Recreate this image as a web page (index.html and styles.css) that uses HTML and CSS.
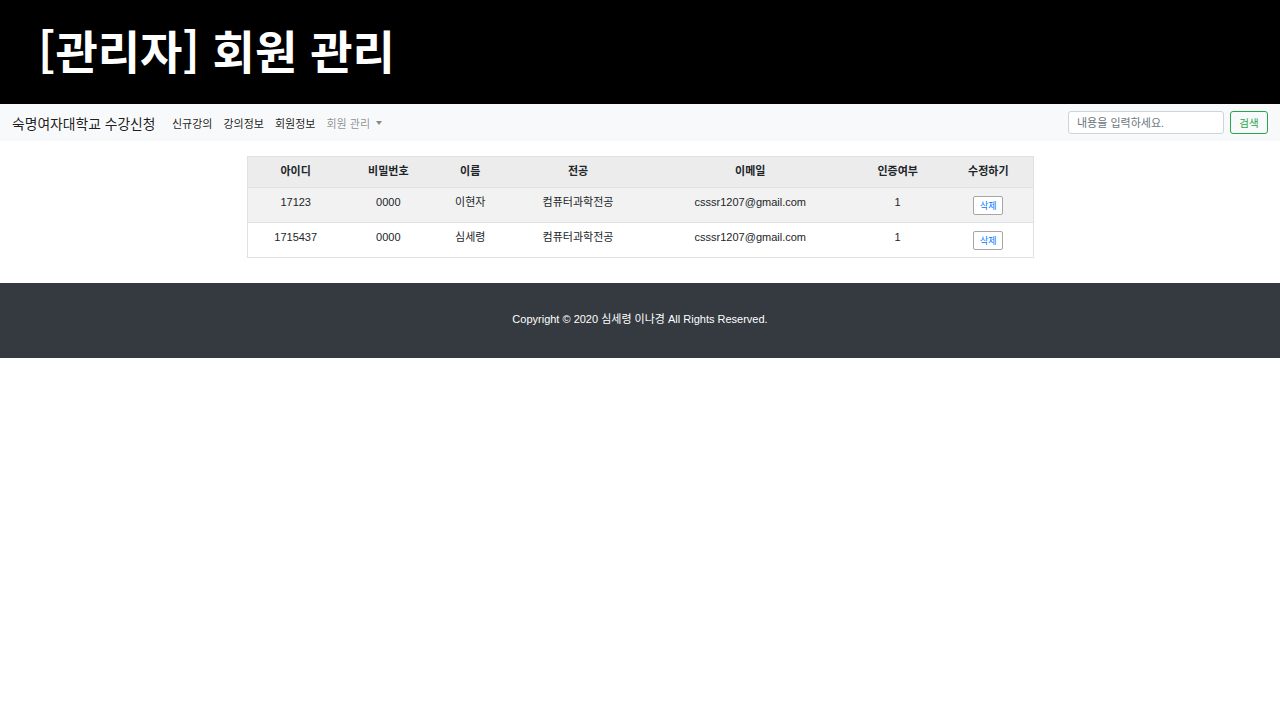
FILE: index.html
```html
<!DOCTYPE html>
<html lang="ko">
<head>
<meta charset="utf-8">
<title>회원 관리</title>
<link rel="stylesheet" href="styles.css">
</head>
<body>
<header class="title-bar">
  <h1 class="title">[관리자] 회원 관리</h1>
</header>
<nav class="navbar">
  <div class="nav-left">
    <a class="brand">숙명여자대학교 수강신청</a>
    <a class="nav-link">신규강의</a>
    <a class="nav-link">강의정보</a>
    <a class="nav-link">회원정보</a>
    <a class="nav-link muted">회원 관리<span class="caret"></span></a>
  </div>
  <form class="search">
    <input class="search-input" type="text" placeholder="내용을 입력하세요.">
    <button class="search-btn" type="button">검색</button>
  </form>
</nav>
<main class="content">
  <table class="members">
    <colgroup>
      <col class="c1"><col class="c2"><col class="c3"><col class="c4"><col class="c5"><col class="c6"><col class="c7">
    </colgroup>
    <thead>
      <tr><th>아이디</th><th>비밀번호</th><th>이름</th><th>전공</th><th>이메일</th><th>인증여부</th><th>수정하기</th></tr>
    </thead>
    <tbody>
      <tr class="odd"><td>17123</td><td>0000</td><td>이현자</td><td>컴퓨터과학전공</td><td>csssr1207@gmail.com</td><td>1</td><td><button class="del" type="button">삭제</button></td></tr>
      <tr><td>1715437</td><td>0000</td><td>심세령</td><td>컴퓨터과학전공</td><td>csssr1207@gmail.com</td><td>1</td><td><button class="del" type="button">삭제</button></td></tr>
    </tbody>
  </table>
</main>
<footer class="footer">
  <p class="copy">Copyright © 2020 심세령 이나경 All Rights Reserved.</p>
</footer>
</body>
</html>
```

FILE: styles.css
```css
* { box-sizing: border-box; }
html, body { margin: 0; padding: 0; background: #fff; }
body {
  font-family: "Liberation Sans", "Noto Sans CJK KR", sans-serif;
  color: #212529;
}
.title-bar {
  background: #000;
  height: 104px;
  display: flex;
  align-items: center;
  padding: 0 0 6px 38px;
}
.title {
  margin: 0;
  color: #fff;
  font-family: "Noto Sans CJK KR", sans-serif;
  font-weight: 700;
  font-size: 46px;
  line-height: 1;
}
.navbar {
  background: #f8f9fa;
  height: 37px;
  display: flex;
  align-items: center;
  justify-content: space-between;
  padding: 0 12px;
}
.nav-left { display: flex; align-items: center; }
.brand {
  font-family: "Noto Sans CJK KR", sans-serif;
  font-size: 13.8px;
  line-height: 16px;
  color: rgba(0,0,0,.9);
  margin-right: 11px;
}
.nav-link {
  font-family: "Noto Sans CJK KR", sans-serif;
  font-size: 11px;
  line-height: 14px;
  color: rgba(0,0,0,.9);
  padding: 0 5.5px;
  display: flex;
  align-items: center;
}
.nav-link.muted { color: rgba(0,0,0,.45); }
.caret {
  display: inline-block;
  margin-left: 6px;
  border-top: 4px solid rgba(0,0,0,.45);
  border-left: 3px solid transparent;
  border-right: 3px solid transparent;
}
.search { display: flex; align-items: center; gap: 6px; margin: 0; }
.search-input {
  width: 156px;
  height: 23px;
  border: 1px solid #ced4da;
  border-radius: 3px;
  padding: 0 8px;
  font-family: "Liberation Sans", "Noto Sans CJK KR", sans-serif;
  font-size: 11px;
  background: #fff;
}
.search-input::placeholder { color: #6c757d; }
.search-btn {
  width: 38px;
  height: 23px;
  border: 1px solid #28a745;
  border-radius: 3px;
  background: transparent;
  color: #28a745;
  font-family: "Noto Sans CJK KR", sans-serif;
  font-size: 10.5px;
  padding: 0;
}
.content {
  display: flex;
  justify-content: center;
  padding: 15px 0 25px;
}
.members {
  width: 787px;
  border-collapse: collapse;
  border: 1px solid #dee2e6;
  font-size: 11px;
  line-height: 13px;
  margin-left: 1px;
}
.c1 { width: 96px; } .c2 { width: 90px; } .c3 { width: 74px; } .c4 { width: 142px; }
.c5 { width: 203px; } .c6 { width: 92px; } .c7 { width: 90px; }
.members th {
  background: #ececec;
  height: 31px;
  font-weight: 700;
  text-align: center;
  border-bottom: 1px solid #dee2e6;
  padding: 0 0 1px;
  vertical-align: middle;
}
.members td {
  height: 35px;
  text-align: center;
  vertical-align: top;
  padding: 8px 0 0;
  border-top: 1px solid #dee2e6;
}
.members tr.odd td { background: #f2f2f2; }
.del {
  width: 30px;
  height: 19px;
  padding: 0;
  background: #fff;
  border: 1px solid #a6a6a6;
  border-radius: 2px;
  color: #007bff;
  font-family: "Noto Sans CJK KR", sans-serif;
  font-size: 9px;
  line-height: 1;
}
.footer {
  background: #343a40;
  height: 75px;
  display: flex;
  align-items: center;
  justify-content: center;
}
.copy {
  margin: 0;
  color: #fff;
  font-size: 11px;
  line-height: 13px;
  padding-bottom: 2px;
}
```
